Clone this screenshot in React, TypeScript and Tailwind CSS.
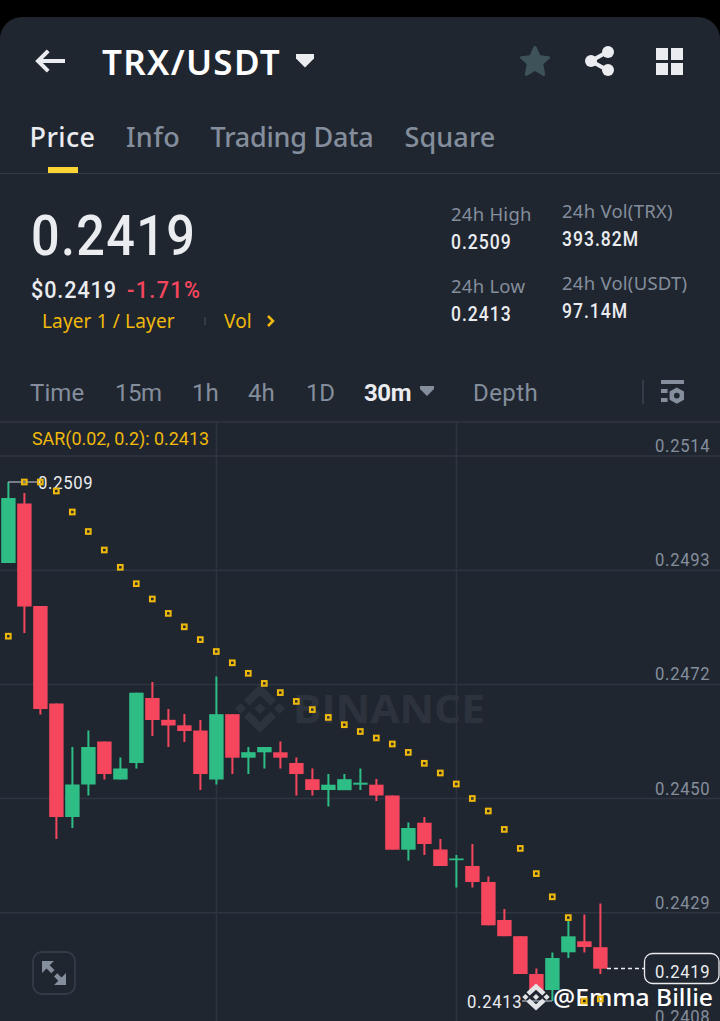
import { clsx } from 'clsx'

type Candle = { up: boolean; open: number; close: number; high: number; low: number }

// [direction, high, body top, body bottom, low] in chart coordinates
const rows: [string, number, number, number, number][] = [
  ['up', 482, 498, 563, 563],
  ['down', 493, 503.5, 606.5, 633],
  ['down', 606, 606, 709, 714.5],
  ['down', 703.5, 703.5, 817, 839],
  ['up', 747, 784.5, 817, 828],
  ['up', 730.5, 747, 784.5, 795.5],
  ['down', 741.5, 741.5, 774, 779.5],
  ['up', 757.5, 768.5, 779.5, 779.5],
  ['up', 692.7, 692.7, 763, 768.5],
  ['down', 682, 698, 720, 736],
  ['down', 709, 719.8, 725.5, 747],
  ['down', 714, 725.3, 731, 742],
  ['down', 720, 730.5, 774, 790],
  ['up', 676.5, 714.2, 779.5, 784.5],
  ['down', 714.2, 714.2, 757.7, 774],
  ['up', 747, 752.2, 757.7, 774],
  ['up', 747, 747, 752.3, 768.5],
  ['down', 741.5, 752.3, 757.7, 768.5],
  ['down', 757.5, 763, 774, 795.5],
  ['down', 768.5, 779.2, 790, 795.5],
  ['up', 774, 784.7, 790, 806.5],
  ['up', 774, 779.2, 790.2, 790],
  ['up', 768.5, 782.7, 784.7, 790],
  ['down', 779, 784.7, 795.5, 801],
  ['down', 795.5, 795.5, 849.7, 849.7],
  ['up', 822.5, 828, 849.7, 860.5],
  ['down', 817, 822.7, 844, 855],
  ['down', 839, 849.5, 866, 866],
  ['up', 855, 858.5, 860.2, 887.5],
  ['down', 844, 866, 882, 887.5],
  ['down', 876.5, 882, 925.3, 925.3],
  ['down', 909, 920, 936.2, 936.2],
  ['down', 936.2, 936.2, 974, 974],
  ['down', 968.5, 974, 990, 990],
  ['up', 952.5, 958, 990, 1001],
  ['up', 920, 936.3, 952.3, 958],
  ['down', 914.5, 941.3, 947, 952.5],
  ['down', 903.5, 947.2, 968.7, 974],
]

const candles: Candle[] = rows.map(([dir, high, open, close, low]) => ({
  up: dir === 'up',
  open,
  close,
  high,
  low,
}))

const sar = [
  636.2, 482, 482, 491, 512, 531.5, 550, 567.3, 583.7, 599, 613.4, 626.8, 639.6, 651.5, 662.8, 673.3,
  683.4, 692.6, 701.4, 709.6, 717.4, 724.7, 731.5, 738, 744, 752.4, 763.3, 773, 784, 798.5, 811,
  829.4, 848.4, 873.6, 896.8, 917.6, 1001, 999,
]

const priceLabels = [
  { y: 452, text: '0.2514' },
  { y: 566, text: '0.2493' },
  { y: 680, text: '0.2472' },
  { y: 795, text: '0.2450' },
  { y: 909, text: '0.2429' },
  { y: 1023, text: '0.2408' },
]

const tabs = [
  { name: 'Price', width: 'w-[65px]', tracking: 'tracking-[0.4px]' },
  { name: 'Info', width: 'w-[54px]', tracking: 'tracking-[0.4px]' },
  { name: 'Trading Data', width: 'w-[162px]', tracking: 'tracking-[-0.25px]' },
  { name: 'Square', width: 'w-[92px]', tracking: 'tracking-[0.1px]' },
]

const intervals = [
  { name: 'Time', className: 'w-[85px] tracking-[0.1px]' },
  { name: '15m', className: 'w-[77px] tracking-[-0.5px]' },
  { name: '1h', className: 'w-[56px] tracking-[0.1px]' },
  { name: '4h', className: 'w-[58px] tracking-[0.1px]' },
  { name: '1D', className: 'w-[58px] tracking-[-0.2px]' },
]

function Header() {
  return (
    <header className="flex h-[88px] items-center pl-[35px] pr-[37px]">
      <svg width="31" height="24" viewBox="0 0 31 24" className="shrink-0" fill="none" stroke="#eaecef" strokeWidth="4">
        <path d="M3 12h27M13.2 1.8L3 12l10.2 10.2" />
      </svg>
      <h1 className="ml-[36px] w-[181px] whitespace-nowrap font-['Noto_Sans'] text-[35px] leading-none font-semibold tracking-[1.3px] text-white">
        TRX/USDT
      </h1>
      <svg width="18" height="14" viewBox="0 0 18 14" className="ml-[13px] shrink-0" fill="#eaecef">
        <path d="M0 0h18v4.500L9 13.500 0 4.500z" />
      </svg>
      <svg width="30" height="30" viewBox="0 0 30 30" className="ml-auto shrink-0" fill="#3e5359">
        <path d="M15 0c.8 0 1.400.6 1.700 1.300l3.600 8 8.400.9c1.300.2 1.800 1.400.8 2.400l-6.200 5.700 1.800 9.700c.2 1.600-.9 2.300-2.100 1.700L15 25l-8 4.700c-1.200.6-2.300-.1-2.100-1.700l1.800-9.700L.5 12.600C-.5 11.600 0 10.400 1.300 10.200l8.400-.9 3.600-8C13.600.6 14.200 0 15 0z" />
      </svg>
      <svg width="29" height="30" viewBox="0 0 29 30" className="ml-[35px] shrink-0" fill="#eaecef">
        <path d="M23 5.500L6 15l17 9.500" fill="none" stroke="#eaecef" strokeWidth="4" />
        <circle cx="23" cy="6" r="6" />
        <circle cx="6" cy="15" r="6" />
        <circle cx="23" cy="24" r="6" />
      </svg>
      <div className="ml-[42px] grid shrink-0 grid-cols-2 gap-[3px]">
        <span className="size-3 bg-[#eaecef]" />
        <span className="size-3 bg-[#eaecef]" />
        <span className="size-3 bg-[#eaecef]" />
        <span className="size-3 bg-[#eaecef]" />
      </div>
    </header>
  )
}

function Tabs() {
  return (
    <nav className="flex h-[69px] gap-[31px] border-b border-[#343b45] pl-[30px] pt-[14px] font-['Noto_Sans'] text-[27px] leading-9 font-medium">
      {tabs.map((tab, i) => (
        <div
          key={tab.name}
          className={clsx(
            'flex flex-col items-center justify-between whitespace-nowrap',
            tab.width,
            tab.tracking,
            i === 0 ? 'text-[#eaecef]' : 'text-[#848e9c]'
          )}
        >
          {tab.name}
          {i === 0 && <span className="h-1.5 w-[30px] bg-[#fcd535]" />}
        </div>
      ))}
    </nav>
  )
}

function Stat({ label, value }: { label: string; value: string }) {
  return (
    <div className="h-[72px] whitespace-nowrap">
      <div className="font-['Noto_Sans'] text-[18.5px] leading-7 tracking-[0.25px] text-[#848e9c]">{label}</div>
      <div className="origin-left scale-x-90 text-[19.5px] leading-[29px] font-medium tracking-[1.1px] text-[#eaecef]">{value}</div>
    </div>
  )
}

function Summary() {
  return (
    <section className="flex h-[188px]">
      <div className="w-[451px] pl-[31px] pt-[33px] whitespace-nowrap">
        <div className="origin-left scale-x-90 text-[56px] leading-[58px] font-medium tracking-[1.5px] text-[#eaecef]">0.2419</div>
        <div className="mt-[10px] flex gap-[11px] text-[24px] leading-[30px] font-medium">
          <span className="w-[85px] origin-left scale-x-90 tracking-[1px] text-[#eaecef]">$0.2419</span>
          <span className="origin-left scale-x-90 tracking-[1.5px] text-[#f6465d]">-1.71%</span>
        </div>
        <div className="flex items-center pl-[11px] font-['Noto_Sans'] text-[19px] leading-8 tracking-[0.15px] text-[#f0b90b]">
          <span className="w-[162px]">Layer 1 / Layer</span>
          <span className="h-2 w-0.5 bg-[#343b47]" />
          <span className="ml-[18px] w-[43px]">Vol</span>
          <svg width="8" height="12" viewBox="0 0 8 12" fill="none" stroke="#f0b90b" strokeWidth="2.500">
            <path d="M1 1l5 5-5 5" />
          </svg>
        </div>
      </div>
      <div className="w-[111px] pt-[26px]">
        <Stat label="24h High" value="0.2509" />
        <Stat label="24h Low" value="0.2413" />
      </div>
      <div className="pt-[23px]">
        <Stat label="24h Vol(TRX)" value="393.82M" />
        <Stat label="24h Vol(USDT)" value="97.14M" />
      </div>
    </section>
  )
}

function IntervalBar() {
  return (
    <div className="flex h-[59px] items-center whitespace-nowrap pl-[30px] text-[24px] tracking-[0.4px] text-[#848e9c]">
      {intervals.map((item) => (
        <span key={item.name} className={clsx('pt-0.5', item.className)}>
          {item.name}
        </span>
      ))}
      <span className="w-[56px] pt-0.5 font-bold tracking-[-0.4px] text-[#eaecef]">30m</span>
      <svg width="14" height="10" viewBox="0 0 14 10" className="mb-0.5" fill="#848e9c">
        <path d="M0 0h14v3L7 10 0 3z" />
      </svg>
      <span className="ml-[39px] w-[169px] pt-0.5">Depth</span>
      <span className="h-6 w-0.5 bg-[#343b47]" />
      <svg width="24" height="25" viewBox="0 0 24 25" className="ml-[17px]" fill="#848e9c">
        <path d="M0 1h23v4H0zM0 10h6.500v4H0zM0 19h6.500v4H0z" />
        <path fillRule="evenodd" d="M15.800 8.500l7.200 4v8.200l-7.200 4-7.200-4v-8.200zM15.800 13.700a2.900 2.900 0 100 5.800 2.900 2.900 0 000-5.800z" />
      </svg>
    </div>
  )
}

function NumberText({ x, y, fill, children }: { x: number; y: number; fill: string; children: string }) {
  return (
    <text fill={fill} fontSize="18.500" letterSpacing="0.800" transform={`translate(${x} ${y}) scale(0.9 1)`}>
      {children}
    </text>
  )
}

function Chart() {
  return (
    <svg width="720" height="600" viewBox="0 421 720 600" className="block font-[Roboto,sans-serif]">
      <g stroke="#2f3540" strokeWidth="1.500">
        <path d="M0 422H720M0 456H720M0 570.300H720M0 684.400H720M0 798.500H720M0 912.700H720" />
        <path d="M216.400 422V1021M456.400 422V1021" />
      </g>

      {/* watermark */}
      <g fill="#2d333d">
        <path d="M260 684l16 16-5.500 5.500L260 695l-10.500 10.500L244 700zM260 733l-16-16 5.500-5.500L260 722l10.500-10.500L276 717zM260 703l5.500 5.500L260 714l-5.500-5.500zM240.500 703l5.500 5.500-5.500 5.500-5.500-5.500zM279.500 703l5.500 5.500-5.500 5.500-5.500-5.500z" />
        <text x="293" y="722.500" fontFamily="Open Sans" fontWeight="700" fontSize="39" textLength="192" lengthAdjust="spacingAndGlyphs">
          BINANCE
        </text>
      </g>

      {priceLabels.map((label) => (
        <NumberText key={label.text} x={655} y={label.y} fill="#848e9c">
          {label.text}
        </NumberText>
      ))}

      <text x="32" y="445" fill="#f0b90b" fontSize="18" textLength="177" lengthAdjust="spacingAndGlyphs">
        SAR(0.02, 0.2): 0.2413
      </text>

      {candles.map((c, i) => {
        const x = 8.4 + i * 16
        return (
          <g key={i} fill={c.up ? '#2ebd85' : '#f6465d'}>
            <rect x={x - 1} y={c.high} width="2" height={c.low - c.high} />
            <rect x={x - 7.2} y={c.open} width="14.400" height={c.close - c.open} />
          </g>
        )
      })}

      <path d="M8 482H40M522 1001H552" stroke="#929aa5" strokeWidth="1.500" />
      <NumberText x={38} y={489} fill="#eaecef">
        0.2509
      </NumberText>
      <NumberText x={467} y={1008} fill="#eaecef">
        0.2413
      </NumberText>

      <path d="M607 968.500H644" stroke="#eaecef" strokeWidth="1.300" strokeDasharray="4 3" />
      <rect x="644.500" y="953.500" width="74.500" height="30" rx="8" fill="#202630" stroke="#eaecef" strokeWidth="1.300" />
      <NumberText x={655} y={978} fill="#eaecef">
        0.2419
      </NumberText>

      {/* full screen button */}
      <rect x="33" y="952" width="42" height="42" rx="9" fill="none" stroke="#343b47" strokeWidth="1.800" />
      <path
        d="M42 961h12l-4.300 4.300 4.800 4.800-3.200 3.200-4.800-4.800L42 973zM66 985H54l4.300-4.300-4.300-4.300 3.200-3.200 4.300 4.300L66 973z"
        fill="#848e9c"
      />

      <path
        d="M536 983.500l9.500 8.800-3.200 3.200-6.300-5.800-6.300 5.800-3.200-3.200zM536 1010.500l-9.500-8.800 3.200-3.200 6.300 5.800 6.300-5.800 3.200 3.200zM536 994l3.100 3-3.100 3-3.100-3zM525.400 994l3.100 3-3.100 3-3.100-3zM546.600 994l3.100 3-3.100 3-3.100-3z"
        fill="#e3e4e6"
      />
      <text x="553" y="1006" fill="#fff" fontFamily="Noto Sans" fontWeight="500" fontSize="24" textLength="160" lengthAdjust="spacingAndGlyphs">
        @Emma Billie
      </text>

      {sar.map((y, i) => (
        <rect key={i} x={6 + i * 16} y={y - 2.3} width="4.600" height="4.600" fill="none" stroke="#edb70b" strokeWidth="2.100" />
      ))}
    </svg>
  )
}

export default function App() {
  return (
    <div className="h-[1021px] w-[720px] overflow-hidden bg-black pt-[17px] font-[Roboto,sans-serif]">
      <main className="rounded-t-[22px] bg-[#202630]">
        <Header />
        <Tabs />
        <Summary />
        <IntervalBar />
        <Chart />
      </main>
    </div>
  )
}
